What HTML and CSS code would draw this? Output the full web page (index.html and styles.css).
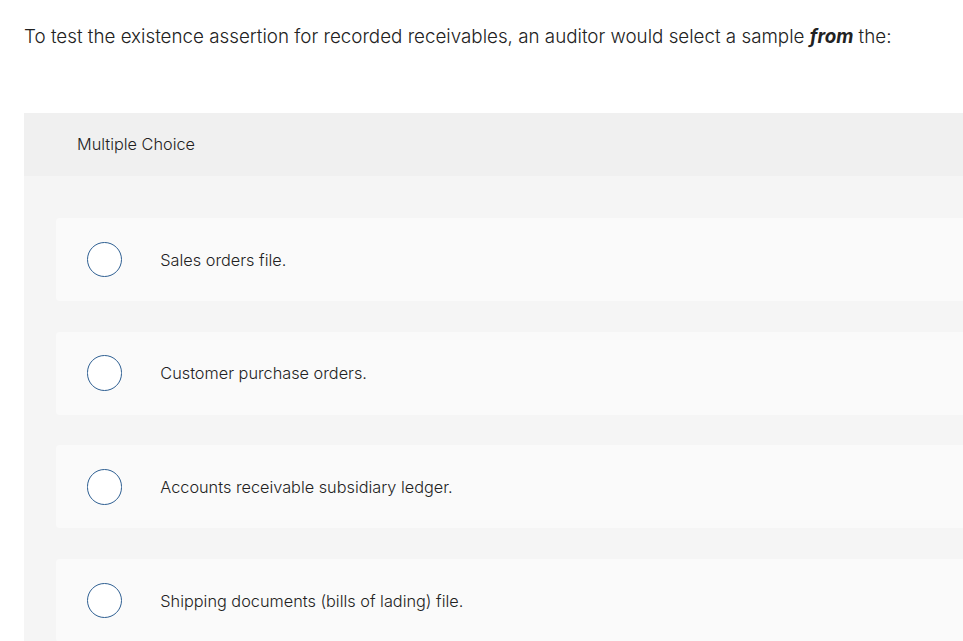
FILE: index.html
```html
<!DOCTYPE html>
<html lang="en">
<head>
<meta charset="utf-8">
<title>Multiple Choice</title>
<link rel="stylesheet" href="styles.css">
</head>
<body>
<main class="page">
  <p class="question">To test the existence assertion for recorded receivables, an auditor would select a sample <strong class="emph">from</strong> the:</p>
  <section class="panel">
    <header class="panel-head">Multiple Choice</header>
    <div class="choices">
      <label class="choice">
        <span class="radio"></span>
        <span class="choice-text">Sales orders file.</span>
      </label>
      <label class="choice">
        <span class="radio"></span>
        <span class="choice-text">Customer purchase orders.</span>
      </label>
      <label class="choice">
        <span class="radio"></span>
        <span class="choice-text">Accounts receivable subsidiary ledger.</span>
      </label>
      <label class="choice">
        <span class="radio"></span>
        <span class="choice-text">Shipping documents (bills of lading) file.</span>
      </label>
    </div>
  </section>
</main>
</body>
</html>
```
FILE: styles.css
```css
html { overflow: hidden; }
body {
  margin: 0;
  background: #ffffff;
  color: #222222;
  font-family: "Inter", "Liberation Sans", sans-serif;
  font-weight: 350;
}
.page {
  padding-left: 24px;
}
.question {
  margin: 0;
  padding-top: 25px;
  font-size: 18.8px;
  line-height: 23px;
  color: #222222;
}
.emph {
  font-weight: 700;
  font-style: italic;
}
.panel {
  margin-top: 65px;
  background: #f5f5f5;
}
.panel-head {
  box-sizing: border-box;
  height: 63px;
  display: flex;
  align-items: center;
  padding: 0 0 2px 53px;
  background: #f0f0f0;
  font-size: 16.3px;
  line-height: 20px;
}
.choices {
  display: flex;
  flex-direction: column;
  gap: 30.7px;
  padding: 42px 0 0 32px;
}
.choice {
  display: flex;
  align-items: center;
  height: 83px;
  background: #fafafa;
  border-radius: 4px 0 0 4px;
}
.radio {
  flex: none;
  box-sizing: border-box;
  width: 35.5px;
  height: 35.5px;
  margin-left: 30.8px;
  border: 1.6px solid #2e5f92;
  border-radius: 50%;
  background: #ffffff;
}
.choice-text {
  margin-left: 38px;
  font-size: 16.3px;
  line-height: 20px;
}
```
